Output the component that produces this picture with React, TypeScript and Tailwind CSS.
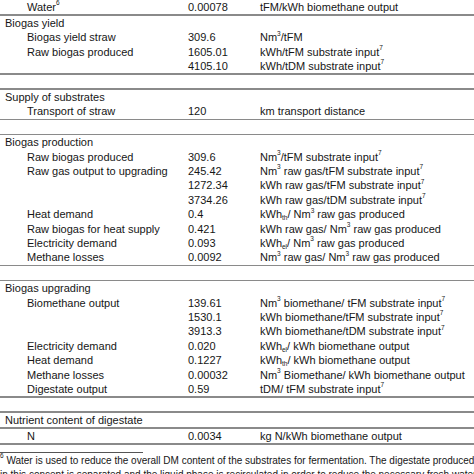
import type { ReactNode } from "react";

const Sup = ({ children }: { children: ReactNode }) => (
  <sup className="text-[6.5px] relative -top-[1px] align-super leading-none">{children}</sup>
);
const Sub = ({ children }: { children: ReactNode }) => (
  <span className="text-[6.5px] relative top-[2px] leading-none">{children}</span>
);

function Line() {
  return <div className="h-[1.5px] bg-[#8a8a8a]" />;
}

function Blank() {
  return <div className="h-[13.5px]" />;
}

function Header({ children }: { children: ReactNode }) {
  return (
    <div className="h-[14.4px] leading-[14.4px] pl-[5px] whitespace-nowrap">{children}</div>
  );
}

function Row({ label, value, unit }: { label?: ReactNode; value: string; unit: ReactNode }) {
  return (
    <div className="grid grid-cols-[183px_72px_1fr] h-[14.4px] leading-[14.4px] pl-[5px] whitespace-nowrap">
      <div className="pl-[22px]">{label}</div>
      <div>{value}</div>
      <div>{unit}</div>
    </div>
  );
}

const in7 = (
  <>
    substrate input<Sup>7</Sup>
  </>
);
const nm3 = (
  <>
    Nm<Sup>3</Sup>
  </>
);

export default function App() {
  return (
    <div className="w-[474px] h-[474px] overflow-hidden bg-white text-[#161616] text-[11px] font-['Liberation_Sans',Arial,sans-serif]">
      <Row
        label={
          <>
            Water<Sup>6</Sup>
          </>
        }
        value="0.00078"
        unit="tFM/kWh biomethane output"
      />
      <Line />
      <Header>Biogas yield</Header>
      <Row label="Biogas yield straw" value="309.6" unit={<>{nm3}/tFM</>} />
      <Row label="Raw biogas produced" value="1605.01" unit={<>kWh/tFM {in7}</>} />
      <Row value="4105.10" unit={<>kWh/tDM {in7}</>} />
      <Line />
      <Blank />
      <Line />
      <Header>Supply of substrates</Header>
      <Row label="Transport of straw" value="120" unit="km transport distance" />
      <Line />
      <Blank />
      <Line />
      <Header>Biogas production</Header>
      <Row label="Raw biogas produced" value="309.6" unit={<>{nm3}/tFM {in7}</>} />
      <Row label="Raw gas output to upgrading" value="245.42" unit={<>{nm3} raw gas/tFM {in7}</>} />
      <Row value="1272.34" unit={<>kWh raw gas/tFM {in7}</>} />
      <Row value="3734.26" unit={<>kWh raw gas/tDM {in7}</>} />
      <Row
        label="Heat demand"
        value="0.4"
        unit={
          <>
            kWh<Sub>th</Sub>/ {nm3} raw gas produced
          </>
        }
      />
      <Row label="Raw biogas for heat supply" value="0.421" unit={<>kWh raw gas/ {nm3} raw gas produced</>} />
      <Row
        label="Electricity demand"
        value="0.093"
        unit={
          <>
            kWh<Sub>el</Sub>/ {nm3} raw gas produced
          </>
        }
      />
      <Row label="Methane losses" value="0.0092" unit={<>{nm3} raw gas/ {nm3} raw gas produced</>} />
      <Line />
      <Blank />
      <Line />
      <Header>Biogas upgrading</Header>
      <Row label="Biomethane output" value="139.61" unit={<>{nm3} biomethane/ tFM {in7}</>} />
      <Row value="1530.1" unit={<>kWh biomethane/tFM {in7}</>} />
      <Row value="3913.3" unit={<>kWh biomethane/tDM {in7}</>} />
      <Row
        label="Electricity demand"
        value="0.020"
        unit={
          <>
            kWh<Sub>el</Sub>/ kWh biomethane output
          </>
        }
      />
      <Row
        label="Heat demand"
        value="0.1227"
        unit={
          <>
            kWh<Sub>th</Sub>/ kWh biomethane output
          </>
        }
      />
      <Row label="Methane losses" value="0.00032" unit={<>{nm3} Biomethane/ kWh biomethane output</>} />
      <Row label="Digestate output" value="0.59" unit={<>tDM/ tFM {in7}</>} />
      <Line />
      <Blank />
      <Line />
      <Header>Nutrient content of digestate</Header>
      <Line />
      <Row label="N" value="0.0034" unit="kg N/kWh biomethane output" />
      <Line />
      <div className="mt-[7px] w-[143px] h-px bg-[#555]" />
      <div className="mt-[1px] text-[10px] leading-[14px] whitespace-nowrap">
        <Sup>6</Sup> Water is used to reduce the overall DM content of the substrates for fermentation. The digestate produced
      </div>
      <div className="text-[10px] leading-[14px] whitespace-nowrap">
        in this concept is separated and the liquid phase is recirculated in order to reduce the necessary fresh water
      </div>
    </div>
  );
}
